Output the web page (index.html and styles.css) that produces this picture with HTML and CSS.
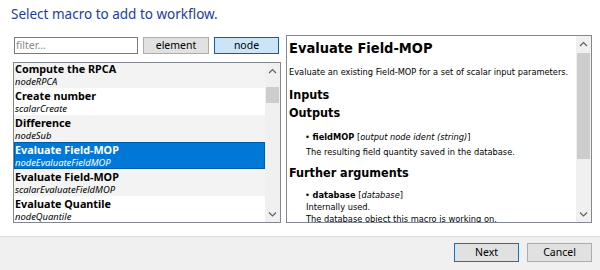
FILE: index.html
```html
<!DOCTYPE html>
<html>
<head>
<meta charset="utf-8">
<link rel="stylesheet" href="styles.css">
</head>
<body>
<div class="dialog">
  <div class="main">
    <div class="title">Select macro to add to workflow.</div>
    <div class="content">
      <div class="left">
        <div class="filter-row">
          <div class="filter">filter...</div>
          <div class="btn">element</div>
          <div class="btn btn-active">node</div>
        </div>
        <div class="list">
          <div class="rows">
            <div class="row alt"><div class="name">Compute the RPCA</div><div class="ident">nodeRPCA</div></div>
            <div class="row"><div class="name">Create number</div><div class="ident">scalarCreate</div></div>
            <div class="row alt"><div class="name">Difference</div><div class="ident">nodeSub</div></div>
            <div class="row sel"><div class="name">Evaluate Field-MOP</div><div class="ident">nodeEvaluateFieldMOP</div></div>
            <div class="row alt"><div class="name">Evaluate Field-MOP</div><div class="ident">scalarEvaluateFieldMOP</div></div>
            <div class="row"><div class="name">Evaluate Quantile</div><div class="ident">nodeQuantile</div></div>
          </div>
          <div class="vscroll">
            <svg class="arrow" width="15" height="16" viewBox="0 0 15 16"><polyline points="4,10 7.5,6.5 11,10" fill="none" stroke="#606060" stroke-width="1.2"/></svg>
            <div class="track list-track"><div class="thumb list-thumb"></div></div>
            <svg class="arrow" width="15" height="16" viewBox="0 0 15 16"><polyline points="4,6.5 7.5,10 11,6.5" fill="none" stroke="#606060" stroke-width="1.2"/></svg>
          </div>
        </div>
      </div>
      <div class="doc">
        <div class="doc-body">
          <div class="doc-title">Evaluate Field-MOP</div>
          <div class="doc-desc">Evaluate an existing Field-MOP for a set of scalar input parameters.</div>
          <div class="doc-h doc-inputs">Inputs</div>
          <div class="doc-h doc-outputs">Outputs</div>
          <div class="arg arg-first">
            <div class="arg-line">• <b>fieldMOP</b> [<i>output node ident (string)</i>]</div>
            <div class="arg-text arg-text-first">The resulting field quantity saved in the database.</div>
          </div>
          <div class="doc-h doc-further">Further arguments</div>
          <div class="arg arg-second">
            <div class="arg-line">• <b>database</b> [<i>database</i>]</div>
            <div class="arg-text">Internally used.</div>
            <div class="arg-text">The database object this macro is working on.</div>
          </div>
        </div>
        <div class="vscroll">
          <svg class="arrow" width="15" height="16" viewBox="0 0 15 16"><polyline points="4,10 7.5,6.5 11,10" fill="none" stroke="#606060" stroke-width="1.2"/></svg>
          <div class="track doc-track"><div class="thumb doc-thumb"></div></div>
          <svg class="arrow" width="15" height="16" viewBox="0 0 15 16"><polyline points="4,6.5 7.5,10 11,6.5" fill="none" stroke="#606060" stroke-width="1.2"/></svg>
        </div>
      </div>
    </div>
  </div>
  <div class="footer">
    <div class="btn fbtn btn-default">Next</div>
    <div class="btn fbtn">Cancel</div>
  </div>
</div>
</body>
</html>
```
FILE: styles.css
```css
html, body {
  margin: 0;
  padding: 0;
  background: #ffffff;
}
body {
  width: 600px;
  height: 270px;
  overflow: hidden;
  font-family: "Noto Sans", "Open Sans", sans-serif;
  color: #000;
}
.dialog {
  display: flex;
  flex-direction: column;
  height: 270px;
}
.main {
  height: 236px;
  box-sizing: border-box;
  padding: 4px 8px 0 13px;
}
.title {
  height: 31px;
  font-size: 13.5px;
  line-height: 20px;
  color: #1c3d9c;
  margin-left: -2px;
}
.content {
  display: flex;
  gap: 5px;
  height: 188px;
}
.left {
  width: 268px;
  display: flex;
  flex-direction: column;
  padding-top: 2px;
  box-sizing: border-box;
}
.filter-row {
  display: flex;
  gap: 5px;
  height: 17px;
  padding-left: 1px;
}
.filter {
  width: 124px;
  height: 17px;
  box-sizing: border-box;
  border: 1px solid #7a7a7a;
  font-size: 10.5px;
  line-height: 15px;
  color: #8a8a8a;
  padding-left: 1px;
}
.btn {
  width: 66px;
  height: 17px;
  box-sizing: border-box;
  border: 1px solid #adadad;
  background: #e1e1e1;
  font-size: 10.5px;
  line-height: 15px;
  text-align: center;
}
.btn-active {
  width: 65px;
  background: #cce4f7;
  border-color: #0b5fa8;
}
.list {
  margin-top: 8px;
  height: 161px;
  box-sizing: border-box;
  border: 1px solid #828790;
  display: flex;
  overflow: hidden;
}
.rows {
  flex: 1;
  margin-top: -2px;
  font-family: "Noto Sans", sans-serif;
}
.row {
  height: 27px;
  box-sizing: border-box;
  padding-left: 1px;
  background: #ffffff;
}
.row.alt {
  background: #f3f3f3;
}
.row.sel {
  background: #0078d7;
  color: #ffffff;
  border: 1px solid #005ca8;
  padding-left: 0;
}
.row.sel .name {
  padding-top: 0;
}
.name {
  font-weight: bold;
  font-size: 10.8px;
  line-height: 14px;
  padding-top: 1px;
}
.ident {
  font-style: italic;
  font-size: 9.4px;
  line-height: 12px;
}
.vscroll {
  width: 15px;
  background: #f0f0f0;
  display: flex;
  flex-direction: column;
}
.arrow {
  display: block;
  flex: none;
}
.track {
  flex: 1;
  position: relative;
}
.thumb {
  position: absolute;
  left: 1px;
  right: 1px;
  background: #cdcdcd;
}
.list-thumb {
  top: 8px;
  height: 16px;
}
.doc {
  width: 306px;
  height: 188px;
  box-sizing: border-box;
  border: 1px solid #828790;
  display: flex;
  overflow: hidden;
}
.doc-body {
  flex: 1;
  padding-left: 2px;
  font-family: "DejaVu Sans Condensed", "DejaVu Sans", sans-serif;
  overflow: hidden;
}
.doc-title {
  font-weight: bold;
  font-size: 14.5px;
  line-height: 20px;
  padding-top: 2px;
}
.doc-desc {
  font-size: 9.2px;
  line-height: 12px;
  margin-top: 8px;
  white-space: nowrap;
}
.doc-h {
  font-weight: bold;
  font-size: 12.5px;
  line-height: 16px;
}
.doc-inputs {
  margin-top: 9px;
}
.doc-outputs {
  margin-top: 2px;
}
.doc-further {
  margin-top: 7px;
}
.arg {
  padding-left: 17px;
  font-size: 9.2px;
  line-height: 12px;
}
.arg-first {
  margin-top: 10px;
}
.arg-second {
  margin-top: 8px;
}
.arg-line {
  margin-left: -1px;
}
.arg-text-first {
  margin-top: 3px;
}
.doc-thumb {
  top: 1px;
  height: 106px;
}
.footer {
  flex: 1;
  background: #f0f0f0;
  border-top: 1px solid #dfdfdf;
  display: flex;
  justify-content: flex-end;
  align-items: flex-start;
  gap: 8px;
  padding: 6px 8px 0 0;
}
.fbtn {
  width: 65px;
  height: 19px;
  line-height: 17px;
  font-size: 10.5px;
}
.btn-default {
  border-color: #0078d7;
}
```
